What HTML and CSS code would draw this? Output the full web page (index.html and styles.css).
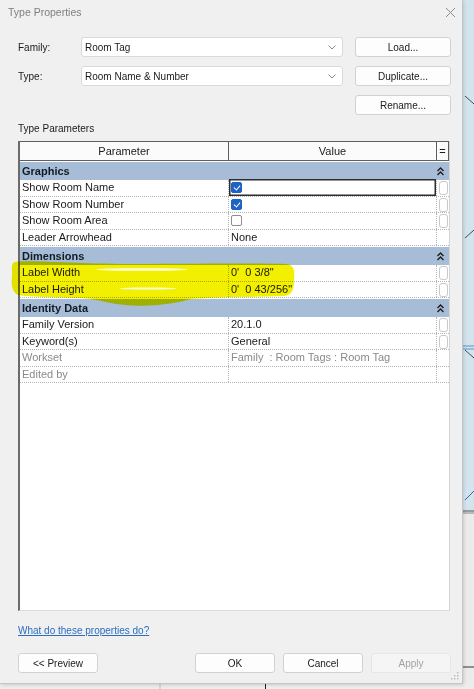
FILE: index.html
```html
<!DOCTYPE html>
<html lang="en">
<head>
  <meta charset="UTF-8">
  <title>Type Properties</title>
  <link rel="stylesheet" href="styles.css">
</head>
<body>
  <!-- the Revit view behind the dialog -->
  <svg class="backdrop" width="474" height="689" viewBox="0 0 474 689">
    <rect x="462" y="0" width="12" height="512" fill="#d4e4ef"/>
    <rect x="462" y="512" width="12" height="177" fill="#ebebeb"/>
    <rect x="0" y="683" width="474" height="6" fill="#ededed"/>
    <line x1="465" y1="96" x2="474" y2="104" stroke="#3b4c5c" stroke-width="1"/>
    <line x1="465" y1="238" x2="474" y2="230" stroke="#3b4c5c" stroke-width="1"/>
    <line x1="463" y1="346" x2="474" y2="346" stroke="#4e97c9" stroke-width="1"/>
    <line x1="463" y1="349" x2="474" y2="349" stroke="#4e97c9" stroke-width="1"/>
    <line x1="465" y1="350" x2="474" y2="358" stroke="#3b4c5c" stroke-width="1"/>
    <line x1="465" y1="500" x2="474" y2="491" stroke="#2f6e9a" stroke-width="1"/>
    <line x1="463" y1="511" x2="474" y2="511" stroke="#555" stroke-width="1"/>
    <line x1="463" y1="513" x2="474" y2="513" stroke="#888" stroke-width="1"/>
    <line x1="463" y1="667" x2="474" y2="667" stroke="#333" stroke-width="1"/>
    <line x1="160" y1="684" x2="160" y2="689" stroke="#bdbdbd" stroke-width="1"/>
    <line x1="265.5" y1="684" x2="265.5" y2="689" stroke="#222" stroke-width="1"/>
  </svg>

  <div class="dialog">
    <div class="titlebar">
      <span class="title">Type Properties</span>
      <svg class="close" width="11" height="11" viewBox="0 0 11 11">
        <path d="M1 1 L10 10 M10 1 L1 10" stroke="#8c8c8c" stroke-width="1"/>
      </svg>
    </div>

    <div class="type-form">
      <label>Family:</label>
      <div class="combo">
        <span>Room Tag</span>
        <svg width="8" height="5" viewBox="0 0 8 5"><path d="M0.5 0.5 L4 4 L7.5 0.5" fill="none" stroke="#8a8a8a"/></svg>
      </div>
      <button class="btn">Load...</button>

      <label>Type:</label>
      <div class="combo">
        <span>Room Name &amp; Number</span>
        <svg width="8" height="5" viewBox="0 0 8 5"><path d="M0.5 0.5 L4 4 L7.5 0.5" fill="none" stroke="#8a8a8a"/></svg>
      </div>
      <button class="btn">Duplicate...</button>

      <button class="btn rename">Rename...</button>
    </div>

    <div class="caption">Type Parameters</div>

    <div class="grid">
      <div class="grid-head">
        <div class="hcell">Parameter</div>
        <div class="hcell">Value</div>
        <div class="hcell">=</div>
      </div>

      <div class="group">
        <span>Graphics</span>
        <svg width="9" height="9" viewBox="0 0 9 9"><path d="M1.5 4 L4.5 1 L7.5 4 M1.5 8 L4.5 5 L7.5 8" fill="none" stroke="#1c1c1c" stroke-width="1.4"/></svg>
      </div>
      <div class="row">
        <div class="cell">Show Room Name</div>
        <div class="cell value focused"><span class="check on"></span></div>
        <div class="cell side"><span class="mini"></span></div>
      </div>
      <div class="row">
        <div class="cell">Show Room Number</div>
        <div class="cell value"><span class="check on"></span></div>
        <div class="cell side"><span class="mini"></span></div>
      </div>
      <div class="row">
        <div class="cell">Show Room Area</div>
        <div class="cell value"><span class="check"></span></div>
        <div class="cell side"><span class="mini"></span></div>
      </div>
      <div class="row">
        <div class="cell">Leader Arrowhead</div>
        <div class="cell value">None</div>
        <div class="cell side"></div>
      </div>

      <div class="group">
        <span>Dimensions</span>
        <svg width="9" height="9" viewBox="0 0 9 9"><path d="M1.5 4 L4.5 1 L7.5 4 M1.5 8 L4.5 5 L7.5 8" fill="none" stroke="#1c1c1c" stroke-width="1.4"/></svg>
      </div>
      <div class="row">
        <div class="cell">Label Width</div>
        <div class="cell value">0'  0 3/8"</div>
        <div class="cell side"><span class="mini"></span></div>
      </div>
      <div class="row">
        <div class="cell">Label Height</div>
        <div class="cell value">0'  0 43/256"</div>
        <div class="cell side"><span class="mini"></span></div>
      </div>

      <div class="group">
        <span>Identity Data</span>
        <svg width="9" height="9" viewBox="0 0 9 9"><path d="M1.5 4 L4.5 1 L7.5 4 M1.5 8 L4.5 5 L7.5 8" fill="none" stroke="#1c1c1c" stroke-width="1.4"/></svg>
      </div>
      <div class="row">
        <div class="cell">Family Version</div>
        <div class="cell value">20.1.0</div>
        <div class="cell side"><span class="mini"></span></div>
      </div>
      <div class="row">
        <div class="cell">Keyword(s)</div>
        <div class="cell value">General</div>
        <div class="cell side"><span class="mini"></span></div>
      </div>
      <div class="row muted">
        <div class="cell">Workset</div>
        <div class="cell value">Family  : Room Tags : Room Tag</div>
        <div class="cell side"></div>
      </div>
      <div class="row muted">
        <div class="cell">Edited by</div>
        <div class="cell value"></div>
        <div class="cell side"></div>
      </div>
    </div>

    <a class="help" href="#">What do these properties do?</a>

    <div class="footer">
      <button class="btn">&lt;&lt; Preview</button>
      <div class="actions">
        <button class="btn">OK</button>
        <button class="btn">Cancel</button>
        <button class="btn" disabled>Apply</button>
      </div>
    </div>

    <!-- highlighter marks drawn over the Dimensions rows -->
    <svg class="highlight" width="300" height="320" viewBox="0 0 300 320">
      <defs>
        <mask id="streaks">
          <rect x="0" y="0" width="300" height="320" fill="#fff"/>
          <ellipse cx="142" cy="269.5" rx="46" ry="1.3" fill="#000" opacity="0.85"/>
          <ellipse cx="148" cy="288.5" rx="28" ry="1.1" fill="#000" opacity="0.85"/>
        </mask>
      </defs>
      <path mask="url(#streaks)" fill="#f3ef00"
        d="M15 262 C30 260 60 263 120 264 C180 264 240 263 286 264
           C294 265 295 270 294 280 C294 290 292 295 284 296
           C250 297 215 297 190 299 C175 304 150 307 125 305
           C105 303 100 299 80 298 C50 297 30 297 18 295
           C12 292 11 285 12 276 C12 268 11 263 15 262 Z"/>
    </svg>

    <svg class="grip" width="8" height="8" viewBox="0 0 8 8">
      <g fill="#b5b5b5">
        <rect x="6" y="0" width="1.4" height="1.4"/>
        <rect x="3" y="3" width="1.4" height="1.4"/>
        <rect x="6" y="3" width="1.4" height="1.4"/>
        <rect x="0" y="6" width="1.4" height="1.4"/>
        <rect x="3" y="6" width="1.4" height="1.4"/>
        <rect x="6" y="6" width="1.4" height="1.4"/>
      </g>
    </svg>
  </div>
</body>
</html>
```

FILE: styles.css
```css
body {
  margin: 0;
  width: 474px;
  height: 689px;
  position: relative;
  overflow: hidden;
  background: #ececec;
  font-family: "Liberation Sans", Arial, sans-serif;
  color: #1a1a1a;
}
.backdrop {
  position: absolute;
  left: 0;
  top: 0;
}
.dialog {
  position: relative;
  width: 463px;
  height: 684px;
  box-sizing: border-box;
  background: #f0f0f0;
  border-right: 1px solid #c6c6c6;
  border-bottom: 1px solid #c6c6c6;
  box-shadow: 1px 1px 3px rgba(0, 0, 0, 0.15);
}
.titlebar {
  height: 24px;
  display: flex;
  align-items: center;
  justify-content: space-between;
  padding: 0 6px 0 8px;
}
.title {
  font-size: 10.5px;
  color: #7f7f7f;
}
.close {
  margin-top: 1px;
}
.type-form {
  display: grid;
  grid-template-columns: 51px 262px 96px;
  grid-auto-rows: 20px;
  column-gap: 12px;
  row-gap: 9px;
  padding: 13px 0 0 18px;
  font-size: 10px;
  align-items: center;
}
.combo {
  height: 20px;
  box-sizing: border-box;
  background: #fff;
  border: 1px solid #dadada;
  border-radius: 3px;
  display: flex;
  align-items: center;
  justify-content: space-between;
  padding: 0 6px 0 3px;
}
.btn {
  height: 20px;
  box-sizing: border-box;
  background: #fdfdfd;
  border: 1px solid #d2d2d2;
  border-radius: 3px;
  font-family: "Liberation Sans", Arial, sans-serif;
  font-size: 10px;
  color: #1a1a1a;
  padding: 0;
}
.btn:disabled {
  background: #f5f5f5;
  border-color: #e6e6e6;
  color: #a3a3a3;
}
.rename {
  grid-column: 3;
}
.caption {
  font-size: 10px;
  margin: 7px 0 0 18px;
  line-height: 14px;
}
.grid {
  margin: 5px 0 0 18px;
  width: 432px;
  height: 470px;
  box-sizing: border-box;
  background: #fff;
  border-left: 2px solid #6b6b6b;
  border-right: 1px solid #d6d6d6;
  border-bottom: 1px solid #dcdcdc;
  font-size: 11px;
}
.grid-head,
.row {
  display: grid;
  grid-template-columns: 209px 208px 1fr;
}
.grid-head {
  height: 20px;
  box-sizing: border-box;
  border-top: 1px solid #5e5e5e;
  border-bottom: 1px solid #5e5e5e;
  background: #fbfbfb;
}
.hcell {
  border-right: 1px solid #5e5e5e;
  text-align: center;
  line-height: 18px;
  font-size: 11px;
}
.group {
  margin-top: 1px;
  height: 18px;
  background: #a7bcd6;
  display: flex;
  align-items: center;
  justify-content: space-between;
  padding: 0 4px 0 2px;
  font-weight: bold;
  color: #111a26;
}
.row {
  height: 16.5px;
  box-sizing: border-box;
  border-bottom: 1px dotted #b3b3b3;
}
.cell {
  border-right: 1px dotted #b3b3b3;
  padding-left: 2px;
  line-height: 15.5px;
  white-space: pre;
  overflow: hidden;
}
.value {
  display: flex;
  align-items: center;
}
.focused {
  box-shadow: inset 0 0 0 1.5px #2d2d2d;
  margin-top: -1px;
}
.side {
  padding: 0;
  border-right: none;
  display: flex;
  justify-content: center;
}
.mini {
  width: 7px;
  height: 12px;
  margin-top: 1px;
  border: 1px solid #c9c9c9;
  border-radius: 3px;
}
.check {
  width: 11px;
  height: 11px;
  box-sizing: border-box;
  border: 1px solid #8e8e8e;
  border-radius: 2px;
  background: #fff;
  position: relative;
}
.check.on {
  background: #1d62c4;
  border-color: #1d62c4;
}
.check.on::after {
  content: "";
  position: absolute;
  left: 3px;
  top: 1px;
  width: 3px;
  height: 5px;
  border: solid #fff;
  border-width: 0 1.2px 1.2px 0;
  transform: rotate(40deg);
}
.muted .cell {
  color: #8a8a8a;
}
.help {
  display: block;
  margin: 13px 0 0 18px;
  font-size: 10px;
  line-height: 14px;
  color: #2b6ebf;
  width: max-content;
}
.footer {
  display: flex;
  justify-content: space-between;
  margin-top: 15px;
  padding: 0 11px 0 18px;
}
.footer .btn {
  width: 80px;
}
.actions {
  display: flex;
  gap: 8px;
}
.highlight {
  position: absolute;
  left: 0;
  top: 0;
  pointer-events: none;
  mix-blend-mode: multiply;
}
.grip {
  position: absolute;
  right: 3px;
  bottom: 3px;
}
```
